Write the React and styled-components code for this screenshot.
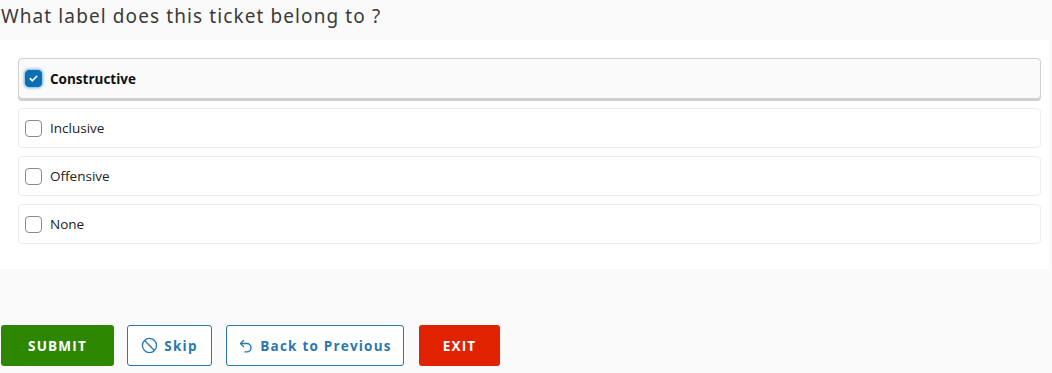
import React, { useState } from 'react'
import styled, { createGlobalStyle } from 'styled-components'

const Global = createGlobalStyle`
  html, body {
    margin: 0;
    padding: 0;
    background: #fafafa;
  }
  body {
    font-family: "Open Sans", "Noto Sans", sans-serif;
  }
`

const Page = styled.div`
  width: 1052px;
  height: 373px;
  overflow: hidden;
`

const Question = styled.h2`
  margin: 0;
  padding: 3px 0 0 1px;
  height: 35px;
  box-sizing: border-box;
  font-family: "Noto Sans", "Open Sans", sans-serif;
  font-weight: 400;
  font-size: 19px;
  line-height: 26px;
  letter-spacing: 1.1px;
  color: #3a3a3a;
`

const Panel = styled.div`
  background: #ffffff;
  width: 1049px;
  margin-top: 5px;
  padding: 18px 8px 25px 18px;
  box-sizing: border-box;
  display: flex;
  flex-direction: column;
  gap: 8px;
`

const Option = styled.label`
  display: flex;
  align-items: center;
  gap: 8px;
  height: ${p => (p.$checked ? '41px' : '40px')};
  box-sizing: border-box;
  padding-left: 6px;
  border-radius: 4px;
  border: 1px solid ${p => (p.$checked ? '#d0d0d0' : '#ededed')};
  background: ${p => (p.$checked ? '#fafafa' : '#ffffff')};
  box-shadow: ${p => (p.$checked ? '0 2px 0 #cfcfcf' : 'none')};
  margin-bottom: ${p => (p.$checked ? '1px' : '0')};
  cursor: pointer;
`

const Box = styled.span`
  width: 17px;
  height: 17px;
  box-sizing: border-box;
  border-radius: 4px;
  border: 1px solid ${p => (p.$checked ? '#0b6fb3' : '#8a8a8a')};
  background: ${p => (p.$checked ? '#0b6fb3' : '#fff')};
  box-shadow: ${p => (p.$checked ? '0 0 3px 1px rgba(11,111,179,0.55)' : 'none')};
  display: flex;
  align-items: center;
  justify-content: center;
`

const Text = styled.span`
  font-family: "Open Sans", "Noto Sans", sans-serif;
  font-size: 13.5px;
  font-weight: ${p => (p.$checked ? 700 : 400)};
  color: ${p => (p.$checked ? '#111' : '#222')};
`

const Actions = styled.div`
  display: flex;
  gap: 13px;
  margin-top: 56px;
  padding-left: 1px;
`

const Button = styled.button`
  height: 41px;
  box-sizing: border-box;
  border-radius: 3px;
  font-family: "Open Sans", "Noto Sans", sans-serif;
  font-weight: 700;
  font-size: 13.5px;
  letter-spacing: 1.2px;
  display: flex;
  align-items: center;
  justify-content: center;
  gap: 6px;
  cursor: pointer;
  padding: 0;
  width: ${p => p.$w}px;
  margin-left: ${p => p.$ml || 0}px;
  ${p =>
    p.$variant === 'outline'
      ? `
    background: #fff;
    color: #2878b0;
    border: 1px solid #2878b0;
  `
      : `
    background: ${p.$bg};
    color: #fff;
    border: none;
  `}
`

const Check = () => (
  <svg width="11" height="11" viewBox="0 0 12 12">
    <path d="M2.5 6.2l2.3 2.3 4.7-4.9" fill="none" stroke="#fff" strokeWidth="1.8" strokeLinecap="round" strokeLinejoin="round" />
  </svg>
)

const BanIcon = () => (
  <svg width="17" height="17" viewBox="0 0 18 18">
    <circle cx="9" cy="9" r="7.5" fill="none" stroke="#2878b0" strokeWidth="1.4" />
    <path d="M3.8 3.8l10.4 10.4" stroke="#2878b0" strokeWidth="1.4" />
  </svg>
)

const UndoIcon = () => (
  <svg width="16" height="16" viewBox="0 0 16 16">
    <path d="M5.5 2.5L2.5 5.5l3 3" fill="none" stroke="#2878b0" strokeWidth="1.4" strokeLinecap="round" strokeLinejoin="round" />
    <path d="M2.8 5.5h6a4.2 4.2 0 0 1 0 8.4H7" fill="none" stroke="#2878b0" strokeWidth="1.4" strokeLinecap="round" />
  </svg>
)

const labels = ['Constructive', 'Inclusive', 'Offensive', 'None']

export default function App() {
  const [selected, setSelected] = useState('Constructive')
  return (
    <Page>
      <Global />
      <Question>What label does this ticket belong to ?</Question>
      <Panel>
        {labels.map(l => {
          const on = selected === l
          return (
            <Option key={l} $checked={on} onClick={() => setSelected(l)}>
              <Box $checked={on}>{on && <Check />}</Box>
              <Text $checked={on}>{l}</Text>
            </Option>
          )
        })}
      </Panel>
      <Actions>
        <Button $bg="#2e8700" $w={113}>SUBMIT</Button>
        <Button $variant="outline" $w={85}>
          <BanIcon />
          Skip
        </Button>
        <Button $variant="outline" $w={178} $ml={1}>
          <UndoIcon />
          Back to Previous
        </Button>
        <Button $bg="#e02200" $w={81} $ml={2}>EXIT</Button>
      </Actions>
    </Page>
  )
}
